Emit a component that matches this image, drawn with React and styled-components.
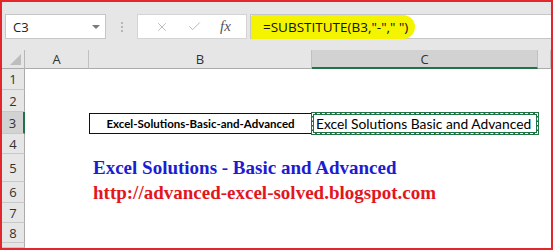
import React from 'react'
import styled, { createGlobalStyle } from 'styled-components'
import { X, Check } from 'lucide-react'

const Global = createGlobalStyle`
  html, body { margin: 0; padding: 0; background: #fff; }
  * { box-sizing: border-box; }
`

const Frame = styled.div`
  width: 553px;
  height: 250px;
  border: 2px solid #e3262b;
  display: flex;
  flex-direction: column;
  background: #fff;
  overflow: hidden;
  font-family: 'Open Sans', 'Liberation Sans', sans-serif;
`

const Toolbar = styled.div`
  height: 48px;
  flex: none;
  background: #e6e6e6;
  padding: 12px 0 11px 3px;
  display: flex;
  align-items: stretch;
`

const NameBox = styled.div`
  width: 101px;
  background: #fff;
  border: 1px solid #c6c6c6;
  display: flex;
  align-items: center;
  justify-content: space-between;
  padding: 0 5px 0 7px;
  font-size: 13px;
  color: #222;
`

const DropArrow = styled.span`
  width: 0;
  height: 0;
  border-left: 4px solid transparent;
  border-right: 4px solid transparent;
  border-top: 4px solid #7a7a7a;
`

const Grip = styled.div`
  width: 31px;
  display: flex;
  flex-direction: column;
  align-items: center;
  justify-content: center;
  gap: 2px;
  span {
    width: 2px;
    height: 2px;
    background: #b5b5b5;
  }
`

const FxBox = styled.div`
  width: 110px;
  background: #fff;
  border: 1px solid #d4d4d4;
  display: flex;
  align-items: center;
  justify-content: space-around;
  padding: 0 6px 0 8px;
  color: #a8a8a8;
`

const FxText = styled.span`
  font-family: 'Liberation Serif', serif;
  font-style: italic;
  font-size: 15px;
  color: #555;
`

const FormulaInput = styled.div`
  flex: 1;
  margin-left: 3px;
  background: #fff;
  border: 1px solid #c6c6c6;
  border-right: none;
  display: flex;
  align-items: center;
  font-size: 13.5px;
  color: #111;
`

const Highlight = styled.span`
  background: #f4f400;
  height: 24px;
  display: flex;
  align-items: center;
  padding: 0 7px 0 12px;
  border-radius: 2px 14px 14px 2px;
`

const Sheet = styled.div`
  flex: 1;
  display: grid;
  grid-template-columns: 23px 64px 223px 226px 1fr;
  grid-template-rows: 19px 21px 22px 22px 20px 28px 21px 20px 20px 1fr;
`

const Corner = styled.div`
  background: #e6e6e6;
  border-right: 1px solid #b7b7b7;
  border-bottom: 1px solid #ababab;
  position: relative;
  &::after {
    content: '';
    position: absolute;
    right: 3px;
    bottom: 3px;
    width: 0;
    height: 0;
    border-left: 11px solid transparent;
    border-bottom: 11px solid #bdbdbd;
  }
`

const ColHead = styled.div`
  background: ${p => (p.active ? '#d2d2d2' : '#e6e6e6')};
  border-right: 1px solid #c0c0c0;
  border-bottom: ${p => (p.active ? '2px solid #217346' : '1px solid #ababab')};
  display: flex;
  align-items: center;
  justify-content: center;
  font-size: 13px;
  color: #333;
`

const RowHead = styled.div`
  grid-column: 1;
  grid-row: ${p => p.row};
  background: ${p => (p.active ? '#d2d2d2' : '#e6e6e6')};
  border-right: ${p => (p.active ? '2px solid #217346' : '1px solid #ababab')};
  border-bottom: 1px solid #c8c8c8;
  display: flex;
  align-items: center;
  justify-content: center;
  font-size: 13px;
  color: #333;
`

const Cell = styled.div`
  grid-row: ${p => p.row};
  grid-column: ${p => p.col} / span ${p => p.span || 1};
  display: flex;
  align-items: center;
  min-width: 0;
`

const BoxedCell = styled(Cell)`
  border: 1px solid #111;
  justify-content: center;
  font-family: 'Lato', 'Liberation Sans', sans-serif;
  font-weight: 700;
  font-size: 11.5px;
  color: #000;
  margin-top: 1px;
`

const CopyCell = styled(Cell)`
  position: relative;
  border: 3px solid #217346;
  margin: 0 -1px -1px -1px;
  padding-left: 2px;
  font-family: 'Lato', 'Liberation Sans', sans-serif;
  font-size: 13.8px;
  color: #000;
  white-space: nowrap;
  &::after {
    content: '';
    position: absolute;
    inset: -2px;
    border: 1px dashed #fff;
  }
`

const Title = styled(Cell)`
  padding-left: 4px;
  font-family: 'Liberation Serif', serif;
  font-weight: 700;
  font-size: ${p => p.size}px;
  color: ${p => p.color};
  white-space: nowrap;
`

const rows = [1, 2, 3, 4, 5, 6, 7, 8, 9]

export default function App() {
  return (
    <>
      <Global />
      <Frame>
        <Toolbar>
          <NameBox>
            C3
            <DropArrow />
          </NameBox>
          <Grip><span /><span /><span /></Grip>
          <FxBox>
            <X size={14} strokeWidth={1.3} />
            <Check size={15} strokeWidth={1.3} />
            <FxText>fx</FxText>
          </FxBox>
          <FormulaInput>
            <Highlight>=SUBSTITUTE(B3,"-"," ")</Highlight>
          </FormulaInput>
        </Toolbar>
        <Sheet>
          <Corner />
          <ColHead>A</ColHead>
          <ColHead>B</ColHead>
          <ColHead active>C</ColHead>
          <ColHead />
          {rows.map(r => (
            <RowHead key={r} row={r + 1} active={r === 3}>{r < 9 ? r : ''}</RowHead>
          ))}
          <BoxedCell row={4} col={3}>Excel-Solutions-Basic-and-Advanced</BoxedCell>
          <CopyCell row={4} col={4}>Excel Solutions Basic and Advanced</CopyCell>
          <Title row={6} col={3} span={3} size={19} color="#1c1cd2">
            Excel Solutions - Basic and Advanced
          </Title>
          <Title row={7} col={3} span={3} size={19} color="#e3151d">
            http://advanced-excel-solved.blogspot.com
          </Title>
        </Sheet>
      </Frame>
    </>
  )
}
